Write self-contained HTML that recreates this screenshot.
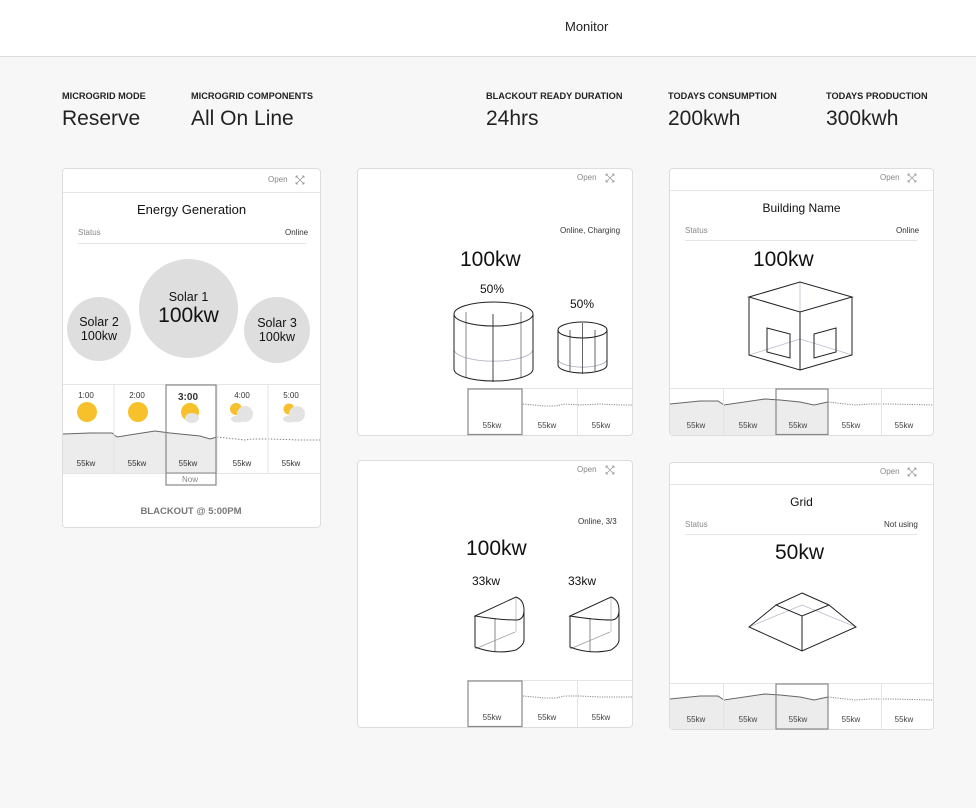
<!DOCTYPE html>
<html><head><meta charset="utf-8"><style>
*{box-sizing:border-box;margin:0;padding:0}
body{width:976px;height:808px;background:#f7f7f7;font-family:"Liberation Sans",sans-serif;color:#111;position:relative;overflow:hidden}
.a{position:absolute}
.top{left:0;top:0;width:976px;height:57px;background:#fff;border-bottom:1px solid #ddd}
.lbl{font-size:9.2px;font-weight:bold;color:#222}
.val{font-size:21px;color:#222}
.card{background:#fff;border:1px solid #ddd;border-radius:4px}
.open{font-size:8px;color:#888}
.sm{font-size:8px;color:#333}
.st{font-size:8px;color:#888}
.c{text-align:center}
.circ{border-radius:50%;background:#dedede;display:flex;flex-direction:column;align-items:center;justify-content:center;color:#111}
</style></head><body>
<div class="a top"></div>
<div class="a" style="left:565px;top:19px;font-size:13px;color:#222">Monitor</div>

<div class="a lbl" style="left:62px;top:91px">MICROGRID MODE</div>
<div class="a val" style="left:62px;top:107px">Reserve</div>
<div class="a lbl" style="left:191px;top:91px">MICROGRID COMPONENTS</div>
<div class="a val" style="left:191px;top:107px">All On Line</div>
<div class="a lbl" style="left:486px;top:91px">BLACKOUT READY DURATION</div>
<div class="a val" style="left:486px;top:107px">24hrs</div>
<div class="a lbl" style="left:668px;top:91px">TODAYS CONSUMPTION</div>
<div class="a val" style="left:668px;top:107px">200kwh</div>
<div class="a lbl" style="left:826px;top:91px">TODAYS PRODUCTION</div>
<div class="a val" style="left:826px;top:107px">300kwh</div>

<!-- Card A -->
<div class="a card" style="left:62px;top:168px;width:259px;height:360px"></div>
<div class="a" style="left:63px;top:192px;width:257px;height:1px;background:#e5e5e5"></div>
<div class="a open" style="left:268px;top:175px">Open</div>
<div class="a c" style="left:62px;top:202px;width:259px;font-size:13px">Energy Generation</div>
<div class="a st" style="left:78px;top:228px">Status</div>
<div class="a sm" style="left:285px;top:228px">Online</div>
<div class="a" style="left:78px;top:243px;width:228px;height:1px;background:#e5e5e5"></div>
<div class="a circ" style="left:139px;top:259px;width:99px;height:99px"><div style="font-size:12.5px">Solar 1</div><div style="font-size:21px">100kw</div></div>
<div class="a circ" style="left:67px;top:297px;width:64px;height:64px"><div style="font-size:12.5px">Solar 2</div><div style="font-size:12.5px">100kw</div></div>
<div class="a circ" style="left:244px;top:297px;width:66px;height:66px"><div style="font-size:12.5px">Solar 3</div><div style="font-size:12.5px">100kw</div></div>

<!-- Card B -->
<div class="a card" style="left:357px;top:168px;width:276px;height:268px"></div>
<div class="a open" style="left:577px;top:173px">Open</div>
<div class="a sm" style="left:560px;top:226px">Online, Charging</div>
<div class="a" style="left:460px;top:248px;font-size:21px">100kw</div>
<div class="a" style="left:480px;top:282px;font-size:12px">50%</div>
<div class="a" style="left:570px;top:297px;font-size:12px">50%</div>

<!-- Card C -->
<div class="a card" style="left:357px;top:460px;width:276px;height:268px"></div>
<div class="a open" style="left:577px;top:465px">Open</div>
<div class="a sm" style="left:578px;top:517px">Online, 3/3</div>
<div class="a" style="left:466px;top:537px;font-size:21px">100kw</div>
<div class="a" style="left:472px;top:574px;font-size:12px">33kw</div>
<div class="a" style="left:568px;top:574px;font-size:12px">33kw</div>

<!-- Card D -->
<div class="a card" style="left:669px;top:168px;width:265px;height:268px"></div>
<div class="a" style="left:670px;top:190px;width:263px;height:1px;background:#e5e5e5"></div>
<div class="a open" style="left:880px;top:173px">Open</div>
<div class="a c" style="left:669px;top:201px;width:265px;font-size:12px">Building Name</div>
<div class="a st" style="left:685px;top:226px">Status</div>
<div class="a sm" style="left:896px;top:226px">Online</div>
<div class="a" style="left:685px;top:240px;width:232px;height:1px;background:#e5e5e5"></div>
<div class="a" style="left:753px;top:248px;font-size:21px">100kw</div>

<!-- Card E -->
<div class="a card" style="left:669px;top:462px;width:265px;height:268px"></div>
<div class="a" style="left:670px;top:484px;width:263px;height:1px;background:#e5e5e5"></div>
<div class="a open" style="left:880px;top:467px">Open</div>
<div class="a c" style="left:669px;top:495px;width:265px;font-size:12px">Grid</div>
<div class="a st" style="left:685px;top:520px">Status</div>
<div class="a sm" style="left:884px;top:520px">Not using</div>
<div class="a" style="left:685px;top:534px;width:232px;height:1px;background:#e5e5e5"></div>
<div class="a" style="left:775px;top:541px;font-size:21px">50kw</div>

<svg class="a" style="left:0;top:0" width="976" height="808" viewBox="0 0 976 808" font-family="Liberation Sans, sans-serif">
<g stroke="#999" stroke-width="0.8" fill="none">
<path d="M296 176l8 8M304 176l-8 8M296 176h2M296 176v2M304 184h-2M304 184v-2M304 176h-2M304 176v2M296 184h2M296 184v-2"/>
<path d="M606 174l8 8M614 174l-8 8M606 174h2M606 174v2M614 182h-2M614 182v-2M614 174h-2M614 174v2M606 182h2M606 182v-2"/>
<path d="M606 466l8 8M614 466l-8 8M606 466h2M606 466v2M614 474h-2M614 474v-2M614 466h-2M614 466v2M606 474h2M606 474v-2"/>
<path d="M908 174l8 8M916 174l-8 8M908 174h2M908 174v2M916 182h-2M916 182v-2M916 174h-2M916 174v2M908 182h2M908 182v-2"/>
<path d="M908 468l8 8M916 468l-8 8M908 468h2M908 468v2M916 476h-2M916 476v-2M916 468h-2M916 468v2M908 476h2M908 476v-2"/>
</g>

<line x1="63" y1="384.5" x2="320" y2="384.5" stroke="#e5e5e5"/>
<line x1="63" y1="473.5" x2="320" y2="473.5" stroke="#e5e5e5"/>
<path d="M63 434L90 433L112 433L117 437L155 431L170 433L200 436L210 439L217 437V473H63Z" fill="#ececec"/>
<path d="M63 434L90 433L112 433L117 437L155 431L170 433L200 436L210 439L217 437" stroke="#666" fill="none"/>
<path d="M217 437L245 440L252 439L270 439L300 440L320 440" stroke="#888" fill="none" stroke-dasharray="1.5 1.5"/>
<g stroke="#e5e5e5"><line x1="114" y1="385" x2="114" y2="473"/><line x1="217" y1="385" x2="217" y2="473"/><line x1="268" y1="385" x2="268" y2="473"/></g>
<rect x="166" y="385" width="50" height="100" fill="none" stroke="#888" stroke-width="1.2"/>
<line x1="166" y1="473" x2="216" y2="473" stroke="#888"/>
<g font-size="8" fill="#333" text-anchor="middle">
<text x="86" y="398">1:00</text><text x="137" y="398">2:00</text><text x="242" y="398">4:00</text><text x="291" y="398">5:00</text>
<text x="188" y="400" font-size="10" font-weight="bold">3:00</text>
<text x="86" y="466">55kw</text><text x="137" y="466">55kw</text><text x="188" y="466">55kw</text><text x="242" y="466">55kw</text><text x="291" y="466">55kw</text>
<text x="190" y="482" fill="#888">Now</text>
<text x="191" y="514" font-size="9.5" font-weight="bold" fill="#777">BLACKOUT @ 5:00PM</text>
</g>
<g fill="#f7c12c"><circle cx="87" cy="412" r="10"/><circle cx="138" cy="412" r="10"/><circle cx="190" cy="412" r="9"/><circle cx="236" cy="409" r="6"/><circle cx="289" cy="409" r="5.5"/></g>
<g fill="#e3e3e3"><ellipse cx="192" cy="418" rx="7" ry="5"/><circle cx="245" cy="414" r="8"/><ellipse cx="238" cy="419" rx="7" ry="3.5"/><circle cx="297" cy="414" r="8"/><ellipse cx="290" cy="419" rx="7" ry="3.5"/></g>

<line x1="467" y1="388.5" x2="632" y2="388.5" stroke="#e5e5e5"/>
<line x1="577.5" y1="389" x2="577.5" y2="435" stroke="#e5e5e5"/>
<rect x="468" y="389" width="54" height="45.5" fill="none" stroke="#888" stroke-width="1.2"/>
<path d="M523 404L545 406L555 406L565 404L580 405L600 404L620 405L632 405" stroke="#888" fill="none" stroke-dasharray="1.2 1.2"/>
<g font-size="8" fill="#444" text-anchor="middle"><text x="492" y="428">55kw</text><text x="547" y="428">55kw</text><text x="601" y="428">55kw</text></g>
<g fill="none">
<path d="M454 349a39 12 0 0 0 79 0" stroke="#aab" stroke-width="0.8"/>
<line x1="466" y1="312" x2="466" y2="378" stroke="#888"/><line x1="521" y1="312" x2="521" y2="378" stroke="#888"/>
<line x1="493" y1="314" x2="493" y2="382" stroke="#444"/>
<ellipse cx="493.5" cy="314" rx="39.5" ry="12" stroke="#222"/>
<path d="M454 314v55a39.5 12 0 0 0 79 0v-55" stroke="#222"/>
<path d="M558 359a24 8 0 0 0 49 0" stroke="#aab" stroke-width="0.8"/>
<line x1="570" y1="330" x2="570" y2="371" stroke="#666"/><line x1="595" y1="330" x2="595" y2="371" stroke="#666"/>
<line x1="582.5" y1="323" x2="582.5" y2="374" stroke="#666"/>
<ellipse cx="582.5" cy="330" rx="24.5" ry="8" stroke="#222"/>
<path d="M558 330v35a24.5 8 0 0 0 49 0v-35" stroke="#222"/>
</g>

<line x1="467" y1="680.5" x2="632" y2="680.5" stroke="#e5e5e5"/>
<line x1="577.5" y1="681" x2="577.5" y2="727" stroke="#e5e5e5"/>
<rect x="468" y="681" width="54" height="45.5" fill="none" stroke="#888" stroke-width="1.2"/>
<path d="M523 696L545 698L555 698L565 696L580 696L600 697L620 697L632 697" stroke="#888" fill="none" stroke-dasharray="1.2 1.2"/>
<g font-size="8" fill="#444" text-anchor="middle"><text x="492" y="720">55kw</text><text x="547" y="720">55kw</text><text x="601" y="720">55kw</text></g>
<g fill="none" stroke-width="1">
<g id="hc">
<path d="M475 649L515 632" stroke="#999" stroke-width="0.7"/>
<line x1="495" y1="618" x2="495" y2="652" stroke="#888"/>
<line x1="516" y1="597" x2="516" y2="632" stroke="#aab" stroke-width="0.7"/>
<path d="M475 616L516 597Q524 600 524 610Q524 620 516 620Q500 620 475 616Z" stroke="#222"/>
<path d="M475 616v31Q495 655 516 650Q524 645 524 640V610" stroke="#222"/>
</g>
<use href="#hc" transform="translate(95 0)"/>
</g>

<g>
<line x1="670" y1="388.5" x2="933" y2="388.5" stroke="#e5e5e5"/>
<path d="M670 404L700 401L718 401L724 405L765 399L780 400L800 402L814 405L828 402V435H670Z" fill="#ececec"/>
<path d="M670 404L700 401L718 401L724 405L765 399L780 400L800 402L814 405L828 402" stroke="#666" fill="none"/>
<path d="M828 402L855 405L870 404L890 404L933 405" stroke="#888" fill="none" stroke-dasharray="1.2 1.2"/>
<g stroke="#e5e5e5"><line x1="723.5" y1="389" x2="723.5" y2="435"/><line x1="881.5" y1="389" x2="881.5" y2="435"/></g>
<rect x="776" y="389" width="52" height="45.5" fill="none" stroke="#888" stroke-width="1.2"/>
<g font-size="8" fill="#444" text-anchor="middle"><text x="696" y="428">55kw</text><text x="748" y="428">55kw</text><text x="798" y="428">55kw</text><text x="851" y="428">55kw</text><text x="904" y="428">55kw</text></g>
</g>
<g fill="none">
<path d="M800 282V339M749 355L800 339L852 355" stroke="#bbc" stroke-width="0.8"/>
<path d="M749 297L800 282L852 297L800 312Z M749 297V355L800 370V312 M852 297V355L800 370" stroke="#222"/>
<path d="M767 328L790 334V358L767 352Z M814 334L836 328V352L814 358Z" stroke="#222"/>
</g>

<g>
<line x1="670" y1="683.5" x2="933" y2="683.5" stroke="#e5e5e5"/>
<path d="M670 699L700 696L718 696L724 700L765 694L780 695L800 697L814 700L828 697V729H670Z" fill="#ececec"/>
<path d="M670 699L700 696L718 696L724 700L765 694L780 695L800 697L814 700L828 697" stroke="#666" fill="none"/>
<path d="M828 697L855 700L870 699L890 699L933 700" stroke="#888" fill="none" stroke-dasharray="1.2 1.2"/>
<g stroke="#e5e5e5"><line x1="723.5" y1="684" x2="723.5" y2="729"/><line x1="881.5" y1="684" x2="881.5" y2="729"/></g>
<rect x="776" y="684" width="52" height="45" fill="none" stroke="#888" stroke-width="1.2"/>
<g font-size="8" fill="#444" text-anchor="middle"><text x="696" y="722">55kw</text><text x="748" y="722">55kw</text><text x="798" y="722">55kw</text><text x="851" y="722">55kw</text><text x="904" y="722">55kw</text></g>
</g>
<g fill="none">
<path d="M749 627L802 605L856 627" stroke="#bbc" stroke-width="0.8"/>
<path d="M802 593L829 605L802 616L776 605Z M776 605L749 627L802 651L856 627L829 605 M802 616V651" stroke="#222"/>
</g>
</svg>
</body></html>
